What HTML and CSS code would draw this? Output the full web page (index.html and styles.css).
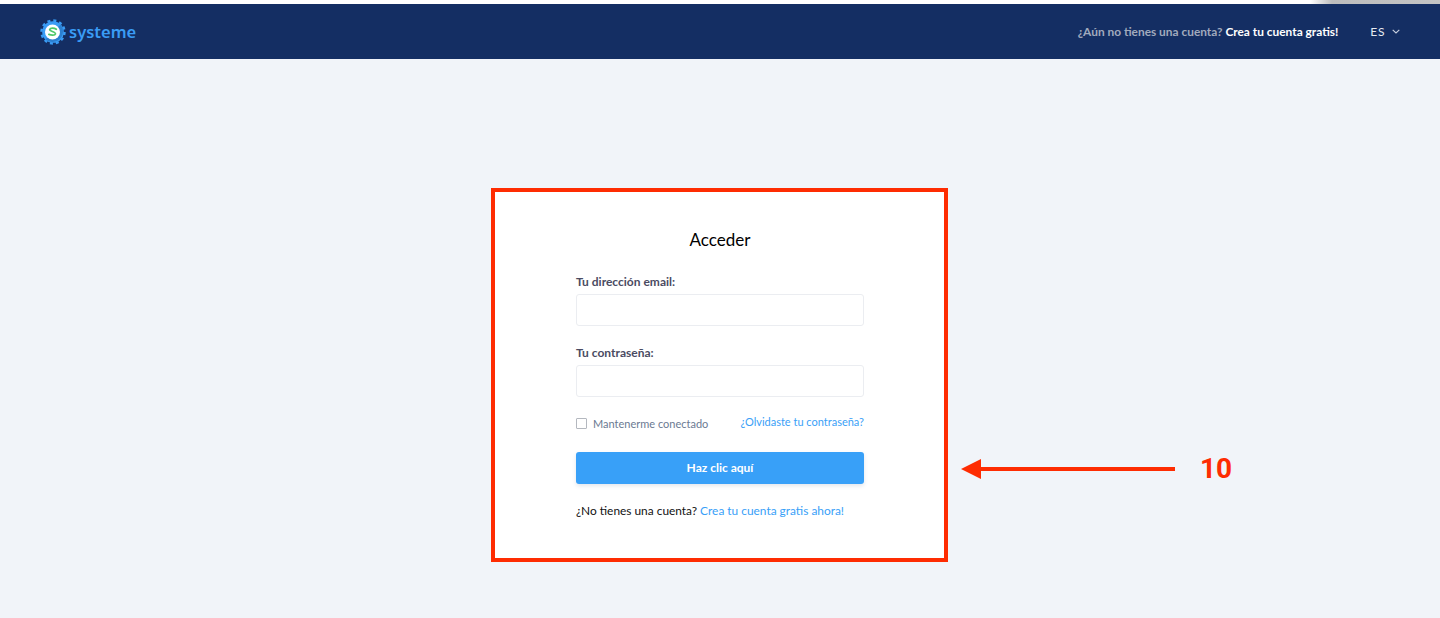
FILE: index.html
```html
<!DOCTYPE html>
<html lang="es">
<head>
<meta charset="utf-8">
<title>Acceder</title>
<link rel="stylesheet" href="styles.css">
</head>
<body>
<div class="topshade"></div>
<header class="header">
  <a class="logo" href="#">
    <svg class="logo-mark" width="26" height="26" viewBox="0 0 26 26">
      <circle cx="13" cy="13" r="10.800" fill="#3a9cf5"/>
      <circle cx="13" cy="13" r="11.500" fill="none" stroke="#3a9cf5" stroke-width="2.400" stroke-dasharray="3.010 3.010"/>
      <path fill="#2b7fd0" d="M20.600 5.400A10.800 10.800 0 0 1 5.400 20.600z"/>
      <circle cx="12.500" cy="13" r="7.500" fill="#fff"/>
      <path fill="none" stroke="#4fc86a" stroke-width="1.800" stroke-linecap="round" d="M16.300 10.300c-2-1.400-6-1.600-6.600.2-.5 1.800 6.200 2.200 5.700 4.400-.5 1.600-4 1.500-6.500.5"/>
    </svg>
    <span class="logo-text">systeme</span>
  </a>
  <nav class="header-nav">
    <p class="signup-prompt">¿Aún no tienes una cuenta? <a href="#">Crea tu cuenta gratis!</a></p>
    <button class="lang" type="button">ES
      <svg width="8" height="5" viewBox="0 0 8 5"><path d="M.7.8L4 4 7.300.8" fill="none" stroke="#c9d1df" stroke-width="1.100"/></svg>
    </button>
  </nav>
</header>
<main class="main">
  <section class="card">
    <h1 class="title">Acceder</h1>
    <form class="form">
      <label class="field-label" for="email">Tu dirección email:</label>
      <input class="input input-first" id="email" type="email">
      <label class="field-label" for="password">Tu contraseña:</label>
      <input class="input" id="password" type="password">
      <div class="options">
        <label class="remember"><span class="checkbox"></span>Mantenerme conectado</label>
        <a class="forgot" href="#">¿Olvidaste tu contraseña?</a>
      </div>
      <button class="submit" type="button">Haz clic aquí</button>
      <p class="register">¿No tienes una cuenta? <a href="#">Crea tu cuenta gratis ahora!</a></p>
    </form>
    <div class="callout">
      <svg class="callout-arrow" width="214" height="20" viewBox="0 0 214 20">
        <path fill="#fe2c02" d="M0 10L20 0v8h194v4H20v8z"/>
      </svg>
      <span class="callout-num">10</span>
    </div>
  </section>
</main>
</body>
</html>
```

FILE: styles.css
```css
* { box-sizing: border-box; }
html, body { margin: 0; height: 100%; }
body {
  background: #f1f4f9;
  font-family: "Lato", "Liberation Sans", sans-serif;
  overflow: hidden;
  padding-top: 4px;
  position: relative;
}
a { text-decoration: none; }
p { margin: 0; }

.topshade {
  position: absolute;
  top: 0; left: 0; right: 0;
  height: 4px;
  background: linear-gradient(90deg, #fff 0, #fff 91%, #bdbdbd 92.500%, #c4c4c4 100%);
}

.header {
  height: 55px;
  background: #142e63;
  display: flex;
  align-items: center;
  justify-content: space-between;
  padding: 0 40px;
}
.logo { display: flex; align-items: center; gap: 3px; }
.logo-mark { display: block; }
.logo-text {
  font-family: "Noto Sans", sans-serif;
  font-size: 16.500px;
  font-weight: 600;
  color: #3a9cf5;
  line-height: 24px;
}
.header-nav { display: flex; align-items: center; gap: 32px; }
.signup-prompt { font-size: 11.900px; font-weight: 700; color: #a1aabd; }
.signup-prompt a { color: #fff; }
.lang {
  background: none;
  border: 0;
  padding: 0;
  font: inherit;
  font-size: 12px;
  letter-spacing: .6px;
  color: #e6eaf1;
  display: flex;
  align-items: center;
  gap: 7px;
}

.main {
  display: flex;
  justify-content: center;
  padding: 129px 1px 0 0;
}
.card {
  width: 457px;
  height: 374px;
  border: 4px solid #fe2c02;
  background: #fff;
  padding: 37px 80px 0 81px;
  position: relative;
  flex: none;
}
.title {
  margin: 0 0 23px;
  font-size: 17px;
  font-weight: 400;
  color: #000;
  text-align: center;
  line-height: 22px;
}
.form { display: flex; flex-direction: column; width: 288px; }
.field-label {
  font-size: 12px;
  font-weight: 700;
  color: #4a4b62;
  line-height: 15px;
  margin-bottom: 5px;
}
.input {
  height: 32px;
  border: 1px solid #ebedf1;
  border-radius: 3px;
  background: #fff;
  padding: 0 10px;
  outline: none;
}
.input-first { margin-bottom: 19px; }
.options {
  display: flex;
  justify-content: space-between;
  align-items: center;
  margin-top: 16px;
  height: 16px;
}
.remember {
  display: flex;
  align-items: center;
  gap: 6px;
  font-size: 11px;
  color: #6b7a92;
  position: relative;
  top: 2px;
}
.checkbox {
  width: 11px;
  height: 11px;
  border: 1px solid #b4b8bf;
  border-radius: 1px;
  background: #fff;
}
.forgot { font-size: 11px; color: #3a9ff7; }
.submit {
  margin-top: 23px;
  height: 32px;
  border: 0;
  border-radius: 3px;
  background: #38a0f8;
  color: #fff;
  font: inherit;
  font-size: 12px;
  font-weight: 700;
  padding: 0 0 2px;
  box-shadow: 0 2px 4px rgba(60, 90, 130, .15);
}
.register { margin-top: 19px; font-size: 11.900px; color: #111; line-height: 16px; }
.register a { color: #38a0f8; }

.callout {
  position: absolute;
  left: 466px;
  top: 267px;
  display: flex;
  align-items: center;
  gap: 25px;
}
.callout-arrow { display: block; flex: none; }
.callout-num {
  font-family: "Roboto", "Liberation Sans", sans-serif;
  font-size: 28px;
  font-weight: 700;
  line-height: 20px;
  color: #fe2c02;
}
```
